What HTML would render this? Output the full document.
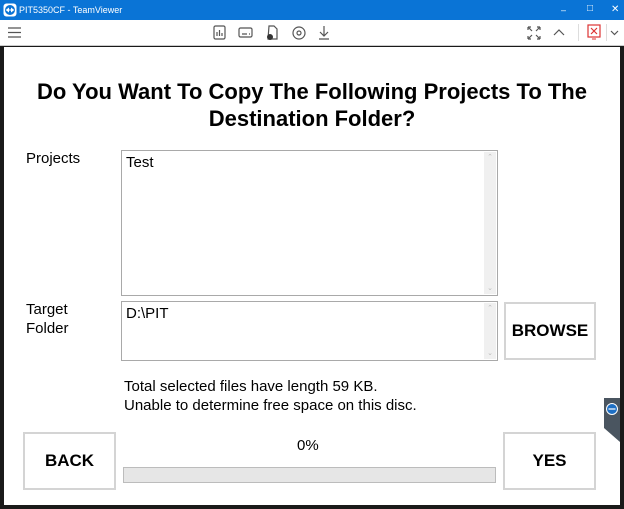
<!DOCTYPE html>
<html><head><meta charset="utf-8"><style>
*{margin:0;padding:0;box-sizing:border-box}
body{width:624px;height:509px;overflow:hidden;background:#1a1a1a;font-family:"Liberation Sans",sans-serif;position:relative}
.abs{position:absolute}
#tb{left:0;top:0;width:624px;height:20px;background:#0a74d6;color:#fff;font-size:9px;line-height:20px}
#tool{left:0;top:20px;width:624px;height:26px;background:#fff;border-bottom:1px solid #ccc}
#content{left:4px;top:47px;width:616px;height:458px;background:#fff}
h1{position:absolute;left:0;top:78px;width:624px;text-align:center;font-size:22px;font-weight:bold;line-height:27px;color:#000}
.lbl{font-size:15px;color:#000}
.box{border:1.5px solid #a9a9a9;background:#fff}
.sb{position:absolute;right:1px;top:1px;bottom:1px;width:12px;background:#f0f0f0;color:#bbb;font-size:7px;text-align:center}
.btn{border:2px solid #d4d4d4;background:#fff;font-weight:bold;font-size:17px;display:flex;align-items:center;justify-content:center}
.ic{stroke:#555;fill:none;stroke-width:1.2}
</style></head><body>
<div id="tb" class="abs">
<svg class="abs" style="left:3px;top:3px" width="14" height="14"><rect x="0.5" y="0.5" width="13" height="13" rx="3" fill="#fff"/><circle cx="7" cy="7" r="5" fill="#0a74d6"/><path d="M3.5 7h7M3.5 7l2-1.5v3zM10.5 7l-2-1.5v3z" stroke="#fff" fill="#fff" stroke-width="1"/></svg>
<span class="abs" style="left:19px;top:0">PIT5350CF - TeamViewer</span>
<span class="abs" style="left:561px;top:0">&#8211;</span>
<span class="abs" style="left:587px;top:-1px;font-size:10px">&#9633;</span>
<span class="abs" style="left:611px;top:0;font-size:10px">&#10005;</span>
</div>
<div id="tool" class="abs">
<svg class="abs" style="left:8px;top:7px" width="13" height="11"><path d="M0 1h13M0 5.5h13M0 10h13" stroke="#555" stroke-width="1.2"/></svg>
<svg class="abs" style="left:213px;top:5px" width="120" height="16">
<rect class="ic" x="1" y="1" width="11" height="13" rx="1.5"/><path class="ic" d="M4 11V7M6.5 11V5M9 11V8"/>
<rect class="ic" x="26" y="3" width="13" height="9" rx="1.5"/><path class="ic" d="M29 9h5M36 9h1"/>
<path class="ic" d="M56 1h5l3 3v10h-9z"/><circle cx="57" cy="12" r="3" fill="#333"/>
<circle class="ic" cx="86" cy="8" r="6"/><circle class="ic" cx="86" cy="8" r="2"/>
<path class="ic" d="M111 1v10M107 7l4 4 4-4M106 14h10"/>
</svg>
<svg class="abs" style="left:527px;top:6px" width="14" height="14"><path class="ic" d="M1 1l4 4M1 1h3M1 1v3M13 1l-4 4M13 1h-3M13 1v3M1 13l4-4M1 13h3M1 13v-3M13 13l-4-4M13 13h-3M13 13v-3"/></svg>
<svg class="abs" style="left:553px;top:8px" width="12" height="8"><path class="ic" d="M1 7l5-5 5 5"/></svg>
<div class="abs" style="left:578px;top:4px;width:1px;height:17px;background:#ddd"></div>
<svg class="abs" style="left:587px;top:4px" width="14" height="17"><rect x="1" y="1" width="12" height="12" fill="none" stroke="#d33" stroke-width="1.2"/><path d="M4 4l6 6M10 4l-6 6" stroke="#d33" stroke-width="1.2"/><path d="M5 15h4" stroke="#d33"/></svg>
<div class="abs" style="left:606px;top:4px;width:1px;height:17px;background:#ddd"></div>
<svg class="abs" style="left:610px;top:10px" width="9" height="6"><path class="ic" d="M1 1l3.5 3.5 3.5-3.5"/></svg>
</div>
<div id="content" class="abs"></div>
<h1>Do You Want To Copy The Following Projects To The<br>Destination Folder?</h1>
<div class="abs lbl" style="left:26px;top:150px">Projects</div>
<div class="abs lbl" style="left:26px;top:300px;line-height:19px">Target<br>Folder</div>
<div class="abs box" style="left:121px;top:150px;width:377px;height:146px"><div class="abs lbl" style="left:4px;top:3px">Test</div><div class="sb"><div style="position:absolute;top:1px;width:100%">&#8963;</div><div style="position:absolute;bottom:2px;width:100%">&#8964;</div></div></div>
<div class="abs box" style="left:121px;top:301px;width:377px;height:60px"><div class="abs lbl" style="left:4px;top:3px">D:\PIT</div><div class="sb"><div style="position:absolute;top:1px;width:100%">&#8963;</div><div style="position:absolute;bottom:2px;width:100%">&#8964;</div></div></div>
<div class="abs btn" style="left:504px;top:302px;width:92px;height:58px">BROWSE</div>
<div class="abs lbl" style="left:124px;top:377px;line-height:19px">Total selected files have length 59 KB.<br>Unable to determine free space on this disc.</div>
<div class="abs btn" style="left:23px;top:432px;width:93px;height:58px">BACK</div>
<div class="abs btn" style="left:503px;top:432px;width:93px;height:58px">YES</div>
<div class="abs lbl" style="left:297px;top:437px">0%</div>
<div class="abs" style="left:123px;top:467px;width:373px;height:16px;background:#e6e6e6;border:1px solid #bcbcbc"></div>
<svg class="abs" style="left:601px;top:398px" width="19" height="44"><path d="M3 0h16v44L3 30z" fill="#4a5560"/><circle cx="11" cy="11" r="5.5" fill="#1e6fc4" stroke="#fff" stroke-width="1"/><path d="M7.5 11h7" stroke="#fff" stroke-width="1.2"/></svg>
</body></html>
